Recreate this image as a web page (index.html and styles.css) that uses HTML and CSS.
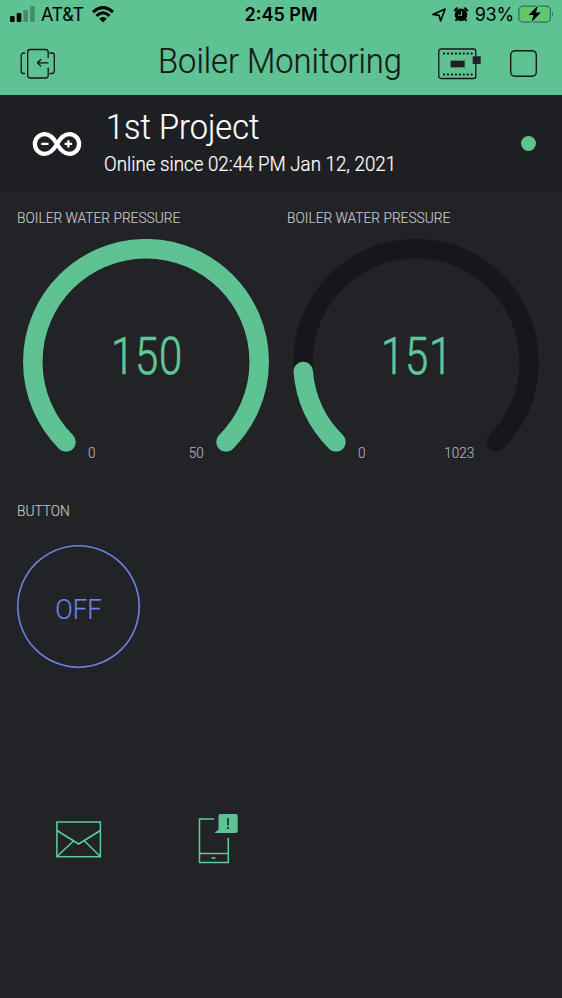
FILE: index.html
```html
<!DOCTYPE html>
<html lang="en">
<head>
<meta charset="utf-8">
<title>Boiler Monitoring</title>
<link rel="stylesheet" href="styles.css">
</head>
<body>
<header class="top">
  <div class="status">
    <div class="status-side">
      <svg class="signal" width="25" height="16" viewBox="0 0 25 16"><rect x="0" y="10" width="4.6" height="6" rx="1.2"/><rect x="6.7" y="7" width="4.6" height="9" rx="1.2"/><g opacity=".27"><rect x="13.4" y="4" width="4.6" height="12" rx="1.2"/><rect x="20.1" y="0" width="4.6" height="16" rx="1.2"/></g></svg>
      <span class="carrier">AT&amp;T</span>
      <svg class="wifi" width="22" height="17" viewBox="0 0 22 17"><g fill="none" stroke="#000" stroke-width="3"><path d="M1 6.1Q11-2.9 21 6.1"/><path d="M4.5 9.8Q11 3.7 17.5 9.8"/></g><path d="M7.2 12.6Q11 9.4 14.8 12.6L11 16.4Z"/></svg>
    </div>
    <span class="clock">2:45 PM</span>
    <div class="status-side right">
      <svg class="arrow" width="14" height="14" viewBox="0 0 14 14" fill="none" stroke="#000" stroke-width="1.6" stroke-linejoin="round"><path d="M.9 6.400L13.100 1L8.600 13L7.100 7.400Z"/></svg>
      <svg class="alarm" width="16" height="15" viewBox="0 0 16 15"><circle cx="8" cy="7.8" r="6.3"/><path d="M1.8 3.4L3.9 1.3M14.2 3.4L12.1 1.3" stroke="#000" stroke-width="2" stroke-linecap="round"/><path d="M3.8 12L2.6 14M12.2 12L13.4 14" stroke="#000" stroke-width="1.8"/><path d="M8.500 4.400V8.300H5" fill="none" stroke="#5fc293" stroke-width="1.1"/></svg>
      <span class="percent">93%</span>
      <svg class="battery" width="37" height="18" viewBox="0 0 37 18"><rect x=".8" y="1.1" width="31.6" height="16" rx="4.4" fill="none" stroke="#347354" stroke-width="1.3"/><rect x="3" y="3.2" width="25.5" height="11.8" rx="2.5" fill="#66c75f"/><path d="M34 6.5Q36 9 34 11.5Z" fill="#347354"/><path d="M19.9.6L10.6 10H15.5L13.5 17.2L22.8 7.6H17.9Z" stroke="#5fc293" stroke-width="2.4"/><path d="M19.9.6L10.6 10H15.5L13.5 17.2L22.8 7.6H17.9Z"/></svg>
    </div>
  </div>
  <nav class="nav">
    <svg class="exit" width="36" height="32" viewBox="0 0 36 32" fill="none" stroke="#151719" stroke-width="1.3"><path d="M28.2 10V4Q28.2 1.5 25.7 1.5H10.2Q7.7 1.5 7.7 4V27.5Q7.7 30 10.2 30H25.7Q28.2 30 28.2 27.5V19.5"/><path d="M5 5H3.7Q1.2 5 1.2 7.5V23Q1.2 25.5 3.7 25.5H5M29.5 5H32Q34.3 5 34.3 7.5V23Q34.3 25.5 32 25.5H29.5M28.5 14.8H17.5M21 11.2L17.5 14.8L21 18.4"/></svg>
    <h1 class="title">Boiler Monitoring</h1>
    <svg class="board" width="43" height="32" viewBox="0 0 43 32"><rect x=".8" y="1" width="37" height="29.5" rx="2" fill="none" stroke="#151719" stroke-width="1.3"/><path d="M5 5.500H35M5 26.500H35" stroke="#151719" stroke-width="2" stroke-dasharray="2 1.950"/><rect x="12.500" y="13" width="14" height="6" fill="#202125"/><path d="M13 16H26.500" stroke="#202125" stroke-width="8" stroke-dasharray="1 1.080" opacity=".7"/><rect x="34.700" y="8.300" width="8" height="7.700" fill="#202125"/></svg>
    <span class="stop"></span>
  </nav>
</header>
<section class="device">
  <svg class="logo" width="50" height="26" viewBox="0 0 50 26" fill="none" stroke="#fff"><path d="M25 13C21 6 17.500 3.200 12.700 3.200A9.800 9.800 0 0 0 12.700 22.800C17.500 22.800 21 20 25 13S32.500 3.200 37.300 3.200A9.800 9.800 0 0 1 37.300 22.800C32.500 22.800 29 20 25 13Z" stroke-width="4.300"/><path d="M9.300 12.900H16.500M32.700 12.900H40.100M36.400 9.200V16.600" stroke-width="2.300"/></svg>
  <div class="info">
    <h2 class="project">1st Project</h2>
    <p class="since">Online since 02:44 PM Jan 12, 2021</p>
  </div>
  <span class="dot"></span>
</section>
<main class="widgets">
  <section class="widget">
    <h3 class="label">BOILER WATER PRESSURE</h3>
    <div class="gauge">
      <svg class="dial" width="246" height="216" viewBox="0 0 246 216"><path class="fill" d="M43 203A113.200 113.200 0 1 1 203 203"/></svg>
      <span class="value">150</span>
      <div class="range"><span>0</span><span class="max">50</span></div>
    </div>
  </section>
  <section class="widget">
    <h3 class="label">BOILER WATER PRESSURE</h3>
    <div class="gauge">
      <svg class="dial" width="246" height="216" viewBox="0 0 246 216"><path class="track" d="M43 203A113.200 113.200 0 1 1 203 203"/><path class="fill" d="M43 203A113.200 113.200 0 0 1 10.200 132.500"/></svg>
      <span class="value">151</span>
      <div class="range"><span>0</span><span class="max">1023</span></div>
    </div>
  </section>
  <section class="widget">
    <h3 class="label">BUTTON</h3>
    <button class="switch"><span>OFF</span></button>
  </section>
</main>
<footer class="notify">
  <svg width="46" height="37" viewBox="0 0 46 37" fill="none" stroke="#62cc99" stroke-width="1.5"><rect x=".9" y="1" width="43.500" height="34.700"/><path d="M1 9.500L22.600 23L44.400 9.500M1 35.500L17.500 20M44.400 35.500L28.500 20"/></svg>
  <svg class="phone" width="41" height="51" viewBox="0 0 41 51" fill="none" stroke="#62cc99" stroke-width="1.500"><path d="M16 6H1.500V49.500H30.300V25M1.500 40.400H30.300M13.500 44.900H17.500"/><path d="M22.500.9H37.500Q39.700.9 39.700 3V18Q39.700 20 37.500 20H16.500L20.500 16.500V3Q20.500.9 22.500.9Z" fill="#5fc293" stroke="none"/><path d="M30 5V12.500M30 14V16" stroke="#202226" stroke-width="1.600"/></svg>
</footer>
</body>
</html>
```
FILE: styles.css
```css
* { box-sizing: border-box; margin: 0; padding: 0; }
body {
  width: 562px;
  height: 998px;
  overflow: hidden;
  background: #222327;
  color: #fff;
  font-family: Roboto, "Liberation Sans", sans-serif;
  font-weight: 300;
}
svg { display: block; flex: none; }
h1, h2, h3, p { font-weight: 300; white-space: nowrap; }

/* Condensed lettering */
.title, .project, .since, .label, .value, .range span { transform-origin: 0 50%; }

.top { height: 95px; background: #5fc293; color: #151719; }
.status {
  display: grid;
  grid-template-columns: 1fr auto 1fr;
  height: 29px;
  padding: 0 7px 0 10px;
  align-items: center;
  color: #000;
  font-family: Inter, sans-serif;
  font-size: 18px;
  font-weight: 400;
}
.status-side { display: flex; align-items: center; }
.right { justify-content: flex-end; }
.signal { margin-bottom: 1px; }
.carrier { margin-left: 6px; letter-spacing: -0.3px; }
.wifi { margin-left: 8px; }
.clock { font-weight: 600; letter-spacing: 0; margin-right: 3px; }
.arrow { margin-right: 7px; }
.alarm { margin-right: 6px; }
.percent { margin-right: 4px; letter-spacing: -0.2px; }
.battery { margin-top: -1px; }

.nav { display: flex; height: 66px; padding: 0 24px 0 20px; align-items: center; }
.exit { margin-top: 3px; }
.title { margin-left: 102px; width: 246px; font-size: 34.5px; line-height: 60px; margin-top: -3px; transform: scaleX(0.948); -webkit-text-stroke: 0.2px; }
.board { margin-left: 34px; margin-top: 3px; }
.stop { flex: none; width: 27px; height: 27px; margin-left: 29px; margin-top: 2px; box-shadow: inset 0 0 0 1.4px #151719; border-radius: 5px; }

.device { display: flex; height: 97px; padding: 0 25px 0 32px; align-items: center; background: #1e1f23; }
.info { flex: 1; margin-left: 22px; }
.project { font-size: 35px; line-height: 40px; margin-top: -4px; margin-left: 2px; transform: scaleX(0.93); -webkit-text-stroke: 0.2px; }
.since { font-size: 20px; line-height: 24px; margin-top: 4px; transform: scaleX(0.937); -webkit-text-stroke: 0.2px; }
.dot { width: 15px; height: 15px; margin-right: 1px; border-radius: 50%; background: #5fc293; }

.widgets { display: grid; grid-template-columns: 270px 270px; grid-template-rows: 293px 180px; padding: 18px 0 0 17px; }
.label { font-size: 14.5px; line-height: 18px; color: #c5c6c8; transform: scaleX(0.948); -webkit-text-stroke: 0.15px; }
.gauge { display: grid; width: 246px; height: 230px; margin: 11px 0 0 6px; }
.gauge > * { grid-area: 1 / 1; }
.dial path { fill: none; stroke-width: 19.5px; stroke-linecap: round; }
.dial .track { stroke: #17171b; }
.dial .fill { stroke: #5fc293; }
.value { margin: 88px 0 0 88px; font-size: 51px; line-height: 60px; letter-spacing: 1px; color: #60c797; transform: scaleX(0.82); -webkit-text-stroke: 0.7px; }
.range { align-self: end; display: flex; justify-content: space-between; margin: 0 65px 7px 65px; font-size: 15px; line-height: 18px; color: #b0b1b4; }
.range span { transform: scaleX(0.9); -webkit-text-stroke: 0.15px; }
.range .max { transform-origin: 100% 50%; }
.switch {
  display: block;
  width: 123px;
  height: 123px;
  margin-top: 24px;
  border: 0;
  border-radius: 50%;
  box-shadow: inset 0 0 0 1.6px #6b84e4;
  background: none;
  color: #6b84e4;
  font: 300 28px/34px Roboto, sans-serif;
}
.switch span { display: block; padding-top: 6px; transform: scaleX(0.92); -webkit-text-stroke: 0.2px; }
.notify { display: flex; align-items: flex-start; padding: 130px 0 0 56px; }
.notify > :first-child { margin-top: 8px; }
.phone { margin-left: 96px; }
```
